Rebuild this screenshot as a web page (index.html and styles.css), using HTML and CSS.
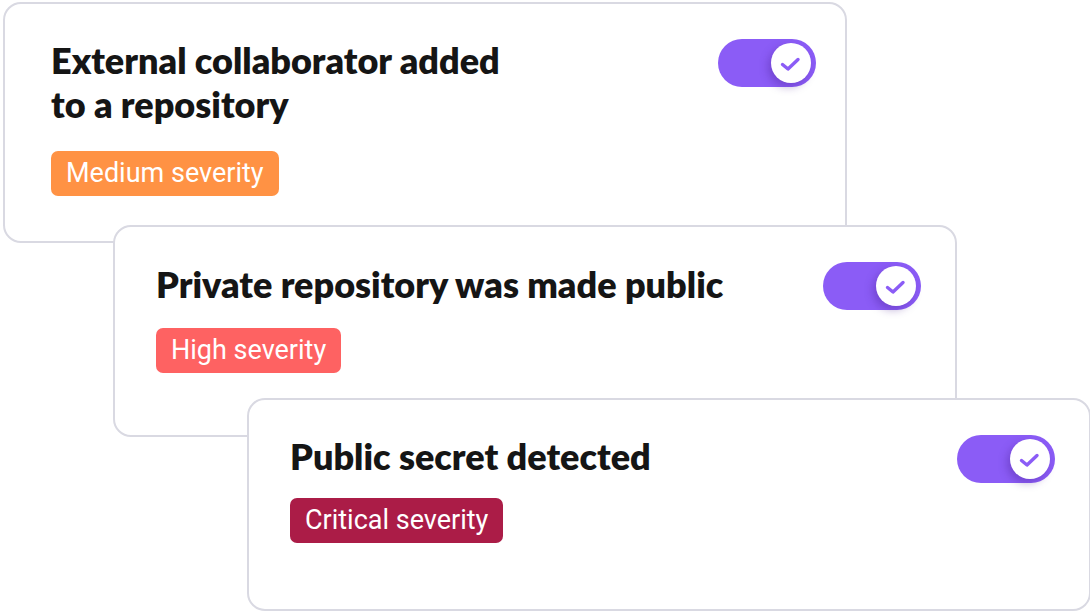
FILE: index.html
```html
<!DOCTYPE html>
<html lang="en">
   <head>
      <meta charset="UTF-8">
      <meta name="viewport" content="width=device-width, initial-scale=1.0">
      <title>Alert rules</title>
      <link rel="stylesheet" href="styles.css">
   </head>
   <body>
      <div class="stack">
         <div class="card card-first">
            <div class="card-head">
               <h2 class="title">External collaborator added<br>to a repository</h2>
               <div class="toggle">
                  <span class="knob">
                     <svg width="40" height="40" viewBox="0 0 40 40"><polyline points="11.5,21.5 17,26 27,16.5" fill="none" stroke="#8b5cf6" stroke-width="3.4" stroke-linecap="round" stroke-linejoin="round"/></svg>
                  </span>
               </div>
            </div>
            <span class="badge badge-medium">Medium severity</span>
         </div>
         <div class="card card-second">
            <div class="card-head">
               <h2 class="title">Private repository was made public</h2>
               <div class="toggle">
                  <span class="knob">
                     <svg width="40" height="40" viewBox="0 0 40 40"><polyline points="11.5,21.5 17,26 27,16.5" fill="none" stroke="#8b5cf6" stroke-width="3.4" stroke-linecap="round" stroke-linejoin="round"/></svg>
                  </span>
               </div>
            </div>
            <span class="badge badge-high">High severity</span>
         </div>
         <div class="card card-third">
            <div class="card-head">
               <h2 class="title">Public secret detected</h2>
               <div class="toggle">
                  <span class="knob">
                     <svg width="40" height="40" viewBox="0 0 40 40"><polyline points="11.5,21.5 17,26 27,16.5" fill="none" stroke="#8b5cf6" stroke-width="3.4" stroke-linecap="round" stroke-linejoin="round"/></svg>
                  </span>
               </div>
            </div>
            <span class="badge badge-critical">Critical severity</span>
         </div>
      </div>
   </body>
</html>
```

FILE: styles.css
```css
/* Alert rule cards */
* {
box-sizing: border-box;
}
body {
margin: 0;
background-color: #ffffff;
font-family: "Lato", "Noto Sans", sans-serif;
overflow: hidden;
}
.stack {
padding: 2px 0 0 0;
width: 1090px;
height: 611px;
}
.card {
position: relative;
width: 844px;
background-color: #ffffff;
border: 2px solid #d9d9e2;
border-radius: 18px;
padding: 33px 34px 0 41px;
}
.card-first {
margin-left: 3px;
height: 241px;
padding-left: 46px;
padding-right: 29px;
}
.card-second {
margin-left: 113px;
margin-top: -18px;
height: 212px;
}
.card-third {
margin-left: 247px;
margin-top: -39px;
height: 213px;
}
.card-head {
display: flex;
justify-content: space-between;
align-items: flex-start;
}
.title {
margin: 1px 0 0 0;
font-size: 36px;
line-height: 44px;
font-weight: 800;
color: #151515;
}
.card-first .title {
margin-bottom: 25px;
}
.card-second .title {
margin-top: 2px;
margin-bottom: 22px;
}
.card-third .title {
margin-bottom: 20px;
}
.toggle {
flex: none;
width: 98px;
height: 48px;
margin-top: 2px;
border-radius: 24px;
background-color: #8b5cf6;
display: flex;
justify-content: flex-end;
align-items: center;
padding-right: 5px;
}
.knob {
width: 40px;
height: 40px;
border-radius: 50%;
background-color: #ffffff;
box-shadow: -3px 4px 8px rgba(70, 30, 140, 0.35);
display: block;
}
.knob svg {
display: block;
}
.badge {
display: inline-block;
height: 45px;
line-height: 45px;
padding: 0 15px;
border-radius: 7px;
font-family: "Roboto", "Liberation Sans", sans-serif;
font-size: 27px;
color: #ffffff;
}
.badge-medium {
background-color: #ff9244;
}
.badge-high {
background-color: #fe6262;
}
.badge-critical {
background-color: #ab1c47;
}
```
